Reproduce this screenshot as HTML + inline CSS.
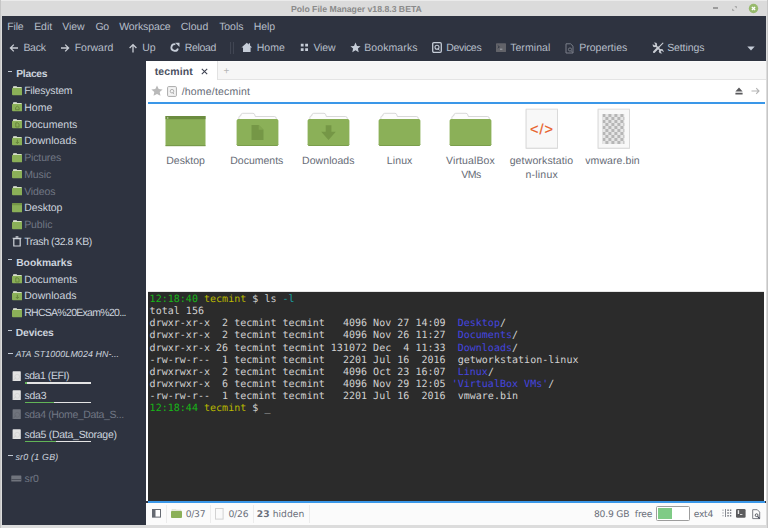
<!DOCTYPE html>
<html><head><meta charset="utf-8"><title>Polo File Manager</title>
<style>
html,body{margin:0;padding:0}
body{width:768px;height:528px;overflow:hidden;background:#dcdcdc;position:relative;font-family:"Liberation Sans",sans-serif;font-size:10.5px;text-rendering:geometricPrecision}
div{box-sizing:border-box}
.abs{position:absolute}
.t{position:absolute;white-space:nowrap;line-height:14px;font-size:10.5px;color:#cdd4de}
.tbx{color:#b6bec9}
.hd{font-weight:700;font-size:10.3px}
.it{font-style:italic;font-size:8.9px}
.dim{color:#717784}
.fl{color:#666b76}
.tab{font-weight:700;color:#4b5162}
.ttl{font-weight:700;font-size:8.7px;color:#8a8a8a}
.st{color:#6a6f7a;font-size:9.2px;font-family:"DejaVu Sans","Liberation Sans",sans-serif}
.dash{position:absolute;width:4.6px;height:1.1px;background:#c0c7d1}
.ic{position:absolute}
.ln{position:absolute;left:149.6px;margin:0;font-family:"DejaVu Sans Mono","Liberation Mono",monospace;font-size:10px;letter-spacing:0.02px;line-height:12px;color:#d2d2d2;white-space:pre}
.g{color:#17b817} .y{color:#b9b900} .c{color:#18a0a0} .b{color:#4545e0}
</style></head><body>
<div class="abs" style="left:0;top:0;width:768px;height:16px;background:#dbdbdb"></div>
<div class="abs" style="left:0;top:0;width:768px;height:1px;background:#ebebeb"></div>
<div class="abs" style="left:0;top:0;width:1px;height:528px;background:#c6c6c6"></div>
<div class="abs" style="left:767px;top:0;width:1px;height:528px;background:#c6c6c6"></div>
<div class="t ttl" style="left:290.90px;top:2.00px;letter-spacing:-0.007px;">Polo File Manager v18.8.3 BETA</div>
<div class="abs" style="left:713.4px;top:7.2px;width:4.6px;height:1.5px;background:#9c9c9c"></div>
<svg class="ic" style="left:731.8px;top:5.8px" width="5" height="5" viewBox="0 0 5 5"><path d="M2.4 0.2h2.4v2.4zM0.2 2.4v2.4h2.4z" fill="#9a9a9a"/></svg>
<svg class="ic" style="left:747.6px;top:2.5px" width="11" height="11" viewBox="0 0 11 11"><circle cx="5.5" cy="5.5" r="4.7" fill="#97ba6c"/><path d="M3.9 3.9l3.2 3.2M7.1 3.9L3.9 7.1" stroke="#fff" stroke-width="1.4"/></svg>

<div class="abs" style="left:2.1px;top:16.1px;width:763.8px;height:509.4px;background:#2e3340"></div>
<div class="t tbx" style="left:7.15px;top:20.00px;letter-spacing:-0.118px;">File</div><div class="t tbx" style="left:34.15px;top:20.00px;letter-spacing:-0.036px;">Edit</div><div class="t tbx" style="left:62.15px;top:20.00px;letter-spacing:-0.032px;">View</div><div class="t tbx" style="left:95.40px;top:20.00px;letter-spacing:-0.408px;">Go</div><div class="t tbx" style="left:119.15px;top:20.00px;letter-spacing:-0.098px;">Workspace</div><div class="t tbx" style="left:180.65px;top:20.00px;letter-spacing:0.052px;">Cloud</div><div class="t tbx" style="left:219.15px;top:20.00px;letter-spacing:-0.063px;">Tools</div><div class="t tbx" style="left:253.65px;top:20.00px;letter-spacing:-0.040px;">Help</div>
<div class="t tbx" style="left:23.40px;top:41.00px;letter-spacing:-0.286px;">Back</div><div class="t tbx" style="left:74.65px;top:41.00px;letter-spacing:0.026px;">Forward</div><div class="t tbx" style="left:142.15px;top:41.00px;letter-spacing:0.006px;">Up</div><div class="t tbx" style="left:184.65px;top:41.00px;letter-spacing:-0.305px;">Reload</div><div class="t tbx" style="left:256.65px;top:41.00px;letter-spacing:0.046px;">Home</div><div class="t tbx" style="left:313.40px;top:41.00px;letter-spacing:-0.095px;">View</div><div class="t tbx" style="left:364.15px;top:41.00px;letter-spacing:0.104px;">Bookmarks</div><div class="t tbx" style="left:446.15px;top:41.00px;letter-spacing:-0.308px;">Devices</div><div class="t tbx" style="left:510.15px;top:41.00px;letter-spacing:0.064px;">Terminal</div><div class="t tbx" style="left:579.15px;top:41.00px;letter-spacing:0.034px;">Properties</div><div class="t tbx" style="left:667.15px;top:41.00px;letter-spacing:-0.094px;">Settings</div>

<svg class="ic" style="left:9px;top:42.5px" width="10" height="10" viewBox="0 0 10 10"><path d="M9 5H1.8M4.8 1.6L1.4 5l3.4 3.4" fill="none" stroke="#c9cdd4" stroke-width="1.3"/></svg>
<svg class="ic" style="left:60px;top:42.5px" width="10" height="10" viewBox="0 0 10 10"><path d="M1 5h7.2M5.2 1.6L8.6 5 5.2 8.4" fill="none" stroke="#c9cdd4" stroke-width="1.3"/></svg>
<svg class="ic" style="left:128px;top:42.5px" width="10" height="10" viewBox="0 0 10 10"><path d="M5 9.4V1.8M1.6 5L5 1.6 8.4 5" fill="none" stroke="#c9cdd4" stroke-width="1.3"/></svg>
<svg class="ic" style="left:169.8px;top:42.1px" width="10" height="10" viewBox="0 0 10 10"><path d="M7.9 6.4A3.3 3.3 0 1 1 5.4 2.3" fill="none" stroke="#c6cdd8" stroke-width="1.8"/><path d="M5.2 0.7h4.3v4.3z" fill="#c6cdd8"/></svg>
<div class="abs" style="left:230px;top:41.5px;width:1px;height:12px;background:#414653"></div>
<div class="abs" style="left:232.5px;top:41.5px;width:1px;height:12px;background:#414653"></div>
<svg class="ic" style="left:241.4px;top:42.3px" width="11.6" height="10.5" viewBox="0 0 11 10"><path d="M5.5 0.6L0.4 5.2h1.5V9.6h7.2V5.2h1.5L8.6 3.4V1.2H7.4v1.1z" fill="#c6cdd8"/></svg>
<svg class="ic" style="left:299.8px;top:43px" width="9" height="9" viewBox="0 0 9 9"><path d="M0.8 0.8h2.8v2.8H0.8zM5.2 0.8H8v2.8H5.2zM0.8 5.2h2.8V8H0.8zM5.2 5.2H8V8H5.2z" fill="#c6cdd8"/></svg>
<svg class="ic" style="left:349.6px;top:42.3px" width="11" height="11" viewBox="0 0 11 11"><path d="M5.5 0.5l1.5 3.4 3.6.3-2.7 2.4.8 3.6L5.5 8.3 2.3 10.2l.8-3.6L.4 4.2l3.6-.3z" fill="#c6cdd8"/></svg>
<svg class="ic" style="left:432px;top:42.3px" width="10" height="11" viewBox="0 0 10 11"><rect x="0.7" y="0.7" width="8.6" height="9.6" rx="1.2" fill="none" stroke="#c6cdd8" stroke-width="1.3"/><circle cx="5" cy="5.3" r="2" fill="none" stroke="#c6cdd8" stroke-width="1.1"/><path d="M6 6.6l1.4 1.8" stroke="#c6cdd8" stroke-width="1"/></svg>
<svg class="ic" style="left:496px;top:43px" width="10" height="9.4" viewBox="0 0 10 9"><rect x="0" y="0" width="10" height="9" rx="0.8" fill="#626369"/><path d="M4 6h2.4" stroke="#b9bcc2" stroke-width="0.8"/><path d="M1.8 2.4l1.6 1.3-1.6 1.3" fill="none" stroke="#2e3340" stroke-width="0.9"/></svg>
<svg class="ic" style="left:565px;top:42.7px" width="9" height="11" viewBox="0 0 9 11"><path d="M1 0.8h4.5L8 3.2V10H1z" fill="none" stroke="#7a7f89" stroke-width="1"/><circle cx="5" cy="6.5" r="1.6" fill="none" stroke="#7a7f89" stroke-width="0.9"/><path d="M6.2 7.8l1.6 1.8" stroke="#7a7f89" stroke-width="0.9"/></svg>
<svg class="ic" style="left:651.6px;top:41.5px" width="12" height="12" viewBox="0 0 12 12"><g fill="#c9cdd4" stroke="none"><path d="M2.4 3.6L3.6 2.4l6 6L8.4 9.6z"/><circle cx="2.9" cy="2.9" r="2.3"/><circle cx="9.2" cy="9.2" r="2.3"/></g><path d="M3.5 2.3L0.4 -0.8L-0.8 0.4L2.3 3.5z" fill="#2e3340"/><path d="M8.6 9.8l3.1 3.1 1.2-1.2-3.1-3.1z" fill="#2e3340"/><path d="M10.9 1.1L6.2 5.8" stroke="#c9cdd4" stroke-width="1.1" stroke-linecap="round"/><path d="M6.4 5.6L2 10" stroke="#c9cdd4" stroke-width="2.1" stroke-linecap="round"/></svg>
<svg class="ic" style="left:747px;top:45.7px" width="8" height="5" viewBox="0 0 8 5"><path d="M0.3 0.5h7.4L4 4.6z" fill="#c6cdd8"/></svg>

<!-- sidebar -->
<div class="dash" style="left:7.6px;top:70.50px"></div><div class="t hd" style="left:16.15px;top:68.00px;letter-spacing:-0.240px;">Places</div><svg class="ic" style="left:11.5px;top:85.65px" width="10.9" height="9.9" viewBox="0 0 11 10"><path d="M1 1 Q1 0.2 1.8 0.2 L4.6 0.2 L5.2 0.9 L9.2 0.9 Q9.9 0.9 9.9 1.6 L9.9 4 L1 4 Z" fill="#eef1e8"/><rect x="0" y="1.7" width="10.8" height="7.6" rx="1" fill="#8bb058"/></svg><div class="t " style="left:24.15px;top:84.00px;letter-spacing:-0.199px;">Filesystem</div><svg class="ic" style="left:11.5px;top:102.4px" width="10.9" height="9.9" viewBox="0 0 11 10"><path d="M1 1 Q1 0.2 1.8 0.2 L4.6 0.2 L5.2 0.9 L9.2 0.9 Q9.9 0.9 9.9 1.6 L9.9 4 L1 4 Z" fill="#eef1e8"/><rect x="0" y="1.7" width="10.8" height="7.6" rx="1" fill="#8bb058"/><path d="M3.6 7.8V5.7L5.4 4.2l1.8 1.5v2.1z" fill="none" stroke="#5f7c36" stroke-width="0.8"/></svg><div class="t " style="left:24.15px;top:101.00px;letter-spacing:0.046px;">Home</div><svg class="ic" style="left:11.5px;top:119.15px" width="10.9" height="9.9" viewBox="0 0 11 10"><path d="M1 1 Q1 0.2 1.8 0.2 L4.6 0.2 L5.2 0.9 L9.2 0.9 Q9.9 0.9 9.9 1.6 L9.9 4 L1 4 Z" fill="#eef1e8"/><rect x="0" y="1.7" width="10.8" height="7.6" rx="1" fill="#8bb058"/><path d="M3.8 3.9h2l1.3 1.2v3h-3.3z" fill="none" stroke="#5f7c36" stroke-width="0.8"/></svg><div class="t " style="left:24.15px;top:118.00px;letter-spacing:0.010px;">Documents</div><svg class="ic" style="left:11.5px;top:135.9px" width="10.9" height="9.9" viewBox="0 0 11 10"><path d="M1 1 Q1 0.2 1.8 0.2 L4.6 0.2 L5.2 0.9 L9.2 0.9 Q9.9 0.9 9.9 1.6 L9.9 4 L1 4 Z" fill="#eef1e8"/><rect x="0" y="1.7" width="10.8" height="7.6" rx="1" fill="#8bb058"/><path d="M5.4 3.8v3.6M3.9 6.1l1.5 1.5 1.5-1.5" fill="none" stroke="#5f7c36" stroke-width="0.9"/></svg><div class="t " style="left:24.15px;top:134.00px;letter-spacing:0.055px;">Downloads</div><svg class="ic" style="left:11.5px;top:152.65px" width="10.9" height="9.9" viewBox="0 0 11 10"><path d="M1 1 Q1 0.2 1.8 0.2 L4.6 0.2 L5.2 0.9 L9.2 0.9 Q9.9 0.9 9.9 1.6 L9.9 4 L1 4 Z" fill="#eef1e8"/><rect x="0" y="1.7" width="10.8" height="7.6" rx="1" fill="#8bb058"/></svg><div class="t dim" style="left:24.15px;top:151.00px;letter-spacing:-0.123px;">Pictures</div><svg class="ic" style="left:11.5px;top:169.4px" width="10.9" height="9.9" viewBox="0 0 11 10"><path d="M1 1 Q1 0.2 1.8 0.2 L4.6 0.2 L5.2 0.9 L9.2 0.9 Q9.9 0.9 9.9 1.6 L9.9 4 L1 4 Z" fill="#eef1e8"/><rect x="0" y="1.7" width="10.8" height="7.6" rx="1" fill="#8bb058"/></svg><div class="t dim" style="left:24.15px;top:168.00px;letter-spacing:-0.094px;">Music</div><svg class="ic" style="left:11.5px;top:186.15px" width="10.9" height="9.9" viewBox="0 0 11 10"><path d="M1 1 Q1 0.2 1.8 0.2 L4.6 0.2 L5.2 0.9 L9.2 0.9 Q9.9 0.9 9.9 1.6 L9.9 4 L1 4 Z" fill="#eef1e8"/><rect x="0" y="1.7" width="10.8" height="7.6" rx="1" fill="#8bb058"/></svg><div class="t dim" style="left:24.15px;top:185.00px;letter-spacing:-0.120px;">Videos</div><svg class="ic" style="left:11.5px;top:202.9px" width="10.9" height="9.9" viewBox="0 0 11 10"><rect x="0" y="0.2" width="10.8" height="9.2" rx="0.7" fill="#8bb058"/><rect x="0" y="0.2" width="10.8" height="2" rx="0.5" fill="#759746"/></svg><div class="t " style="left:24.15px;top:201.00px;letter-spacing:-0.047px;">Desktop</div><svg class="ic" style="left:11.5px;top:219.65px" width="10.9" height="9.9" viewBox="0 0 11 10"><path d="M1 1 Q1 0.2 1.8 0.2 L4.6 0.2 L5.2 0.9 L9.2 0.9 Q9.9 0.9 9.9 1.6 L9.9 4 L1 4 Z" fill="#eef1e8"/><rect x="0" y="1.7" width="10.8" height="7.6" rx="1" fill="#8bb058"/></svg><div class="t dim" style="left:24.15px;top:218.00px;letter-spacing:-0.068px;">Public</div><svg class="ic" style="left:12px;top:235.55px" width="10" height="11" viewBox="0 0 10 11"><path d="M1.8 2.6h6.4v7.4H1.8z" fill="none" stroke="#d0d4da" stroke-width="1.2"/><path d="M0.6 2.2h8.8M3.6 0.9h2.8" stroke="#d0d4da" stroke-width="1.1"/></svg><div class="t " style="left:24.15px;top:235.00px;letter-spacing:-0.402px;">Trash (32.8 KB)</div><div class="dash" style="left:7.6px;top:259.00px"></div><div class="t hd" style="left:16.15px;top:257.00px;letter-spacing:0.012px;">Bookmarks</div><svg class="ic" style="left:11.5px;top:274.15px" width="10.9" height="9.9" viewBox="0 0 11 10"><path d="M1 1 Q1 0.2 1.8 0.2 L4.6 0.2 L5.2 0.9 L9.2 0.9 Q9.9 0.9 9.9 1.6 L9.9 4 L1 4 Z" fill="#eef1e8"/><rect x="0" y="1.7" width="10.8" height="7.6" rx="1" fill="#8bb058"/><path d="M3.8 3.9h2l1.3 1.2v3h-3.3z" fill="none" stroke="#5f7c36" stroke-width="0.8"/></svg><div class="t " style="left:24.15px;top:273.00px;letter-spacing:0.010px;">Documents</div><svg class="ic" style="left:11.5px;top:291.0px" width="10.9" height="9.9" viewBox="0 0 11 10"><path d="M1 1 Q1 0.2 1.8 0.2 L4.6 0.2 L5.2 0.9 L9.2 0.9 Q9.9 0.9 9.9 1.6 L9.9 4 L1 4 Z" fill="#eef1e8"/><rect x="0" y="1.7" width="10.8" height="7.6" rx="1" fill="#8bb058"/><path d="M5.4 3.8v3.6M3.9 6.1l1.5 1.5 1.5-1.5" fill="none" stroke="#5f7c36" stroke-width="0.9"/></svg><div class="t " style="left:24.15px;top:289.00px;letter-spacing:0.055px;">Downloads</div><svg class="ic" style="left:11.5px;top:307.75px" width="10.9" height="9.9" viewBox="0 0 11 10"><path d="M1 1 Q1 0.2 1.8 0.2 L4.6 0.2 L5.2 0.9 L9.2 0.9 Q9.9 0.9 9.9 1.6 L9.9 4 L1 4 Z" fill="#eef1e8"/><rect x="0" y="1.7" width="10.8" height="7.6" rx="1" fill="#8bb058"/></svg><div class="t " style="left:24.15px;top:306.00px;letter-spacing:-0.705px;">RHCSA%20Exam%20...</div><div class="dash" style="left:7.6px;top:329.80px"></div><div class="t hd" style="left:15.85px;top:327.00px;letter-spacing:-0.163px;">Devices</div><div class="dash" style="left:8.3px;top:352.80px"></div><div class="t it" style="left:15.40px;top:347.00px;letter-spacing:0.082px;">ATA ST1000LM024 HN-...</div><svg class="ic" style="left:12.4px;top:370.5px" width="10" height="11" viewBox="0 0 10 11"><rect x="0.6" y="0.3" width="8.2" height="9.8" rx="0.7" fill="#e4e4e4"/><circle cx="5.2" cy="5.8" r="2.4" fill="none" stroke="#cfcfcf" stroke-width="0.6"/><path d="M1.2 9.6l2.6-3.2" stroke="#cfcfcf" stroke-width="0.9"/></svg><div class="t " style="left:24.45px;top:369.00px;letter-spacing:-0.452px;">sda1 (EFI)</div><div class="abs" style="left:24.7px;top:382.1px;width:66.1px;height:1.6px;background:#e4e4e4"><div style="width:2px;height:1.6px;background:#62b457"></div></div><svg class="ic" style="left:12.4px;top:390.0px" width="10" height="11" viewBox="0 0 10 11"><rect x="0.6" y="0.3" width="8.2" height="9.8" rx="0.7" fill="#e4e4e4"/><circle cx="5.2" cy="5.8" r="2.4" fill="none" stroke="#cfcfcf" stroke-width="0.6"/><path d="M1.2 9.6l2.6-3.2" stroke="#cfcfcf" stroke-width="0.9"/></svg><div class="t " style="left:24.45px;top:389.00px;letter-spacing:-0.245px;">sda3</div><div class="abs" style="left:24.7px;top:401.6px;width:66.1px;height:1.6px;background:#e4e4e4"><div style="width:29px;height:1.6px;background:#62b457"></div></div><svg class="ic" style="left:12.4px;top:409.0px" width="10" height="11" viewBox="0 0 10 11"><rect x="0.6" y="0.3" width="8.2" height="9.8" rx="0.7" fill="#70747d"/><circle cx="5.2" cy="5.8" r="2.4" fill="none" stroke="#63676f" stroke-width="0.6"/><path d="M1.2 9.6l2.6-3.2" stroke="#63676f" stroke-width="0.9"/></svg><div class="t dim" style="left:24.45px;top:408.00px;letter-spacing:-0.376px;">sda4 (Home_Data_S...</div><svg class="ic" style="left:12.4px;top:429.0px" width="10" height="11" viewBox="0 0 10 11"><rect x="0.6" y="0.3" width="8.2" height="9.8" rx="0.7" fill="#e4e4e4"/><circle cx="5.2" cy="5.8" r="2.4" fill="none" stroke="#cfcfcf" stroke-width="0.6"/><path d="M1.2 9.6l2.6-3.2" stroke="#cfcfcf" stroke-width="0.9"/></svg><div class="t " style="left:24.45px;top:428.00px;letter-spacing:-0.273px;">sda5 (Data_Storage)</div><div class="abs" style="left:24.7px;top:440.6px;width:66.1px;height:1.6px;background:#e4e4e4"><div style="width:31.6px;height:1.6px;background:#62b457"></div></div><div class="dash" style="left:8.3px;top:455.30px"></div><div class="t it" style="left:15.40px;top:450.00px;letter-spacing:0.221px;">sr0 (1 GB)</div><svg class="ic" style="left:11.2px;top:474.7px" width="11" height="7.4" viewBox="0 0 12 8"><rect x="0.3" y="0.5" width="11" height="6.5" rx="0.6" fill="#70747d"/><rect x="0.3" y="4.4" width="11" height="1" fill="#4a4e58"/></svg><div class="t dim" style="left:24.45px;top:472.00px;letter-spacing:-0.031px;">sr0</div>
<!-- main -->
<div class="abs" style="left:146.2px;top:61px;width:619.5px;height:440px;background:#fff"></div>
<div class="abs" style="left:146.2px;top:61px;width:619.5px;height:19px;background:#f6f6f6;border-top:1px solid #fafafa;border-bottom:1px solid #e4e4e4"></div>
<div class="abs" style="left:146px;top:61px;width:71.7px;height:19px;background:#fff;border-right:1px solid #e2e2e2"></div>
<div class="t tab" style="left:154.65px;top:65.00px;letter-spacing:0.137px;">tecmint</div>
<svg class="ic" style="left:201px;top:67.8px" width="7" height="7" viewBox="0 0 7 7"><path d="M0.8 0.8l5.4 5.4M6.2 0.8L0.8 6.2" stroke="#3c4150" stroke-width="1.05"/></svg>
<div class="abs" style="left:223.6px;top:65px;font-size:10px;line-height:14px;color:#b5b5b5">+</div>
<svg class="ic" style="left:151px;top:85.4px" width="12" height="11" viewBox="0 0 12 11"><path d="M6 0.4l1.7 3.6 3.9.4-2.9 2.6.8 3.8L6 8.9 2.5 10.8l.8-3.8L.4 4.4l3.9-.4z" fill="#b9b9b9"/></svg>
<svg class="ic" style="left:167px;top:85.6px" width="10" height="11" viewBox="0 0 10 11"><rect x="0.6" y="0.6" width="8.8" height="9.8" rx="1" fill="#f4f4f4" stroke="#a9a9a9" stroke-width="1"/><circle cx="5" cy="5.2" r="1.8" fill="none" stroke="#a9a9a9" stroke-width="0.9"/><path d="M5.8 6.4l1.2 1.8" stroke="#a9a9a9" stroke-width="0.9"/></svg>
<div class="t fl" style="left:181.65px;top:85.00px;letter-spacing:0.196px;">/home/tecmint</div>
<svg class="ic" style="left:735px;top:87.4px" width="8" height="8" viewBox="0 0 8 8"><path d="M4 0.4L7.6 4.6H0.4zM0.4 5.8h7.2v1.6H0.4z" fill="#5a5a5d"/></svg>
<svg class="ic" style="left:751px;top:87.4px" width="9" height="8" viewBox="0 0 9 8"><path d="M0.5 4h7.4M5.2 1.2L8 4 5.2 6.8" fill="none" stroke="#b4b4b4" stroke-width="1.1"/></svg>
<div class="abs" style="left:147.7px;top:102.2px;width:617.4px;height:2.1px;background:#3a97e8"></div>
<svg class="ic" style="left:164.40px;top:110px" width="43" height="38" viewBox="0 0 43 38"><rect x="1.5" y="6" width="40" height="30.1" fill="#8bb058"/><rect x="1.5" y="6" width="40" height="3.2" fill="#6b8c3f"/><rect x="3.2" y="7.4" width="1.1" height="1.1" fill="#eef3e2"/><rect x="1.5" y="35.4" width="40" height="0.7" fill="#6b8c3f"/></svg><svg class="ic" style="left:235.60px;top:110px" width="43" height="38" viewBox="0 0 43 38"><path d="M2.9 7.4 Q2.9 6 4 6 L4.6 6 Q4.8 3.3 6.6 3.3 L17 3.3 Q18.4 3.3 18.8 4.8 L19.3 6.5 L38.4 6.5 Q40.3 6.5 40.3 8.4 L40.3 13 L2.9 13 Z" fill="#fdfdfd" stroke="#c9c9c9" stroke-width="0.7"/><rect x="0.6" y="9" width="41.8" height="27.1" rx="1.8" fill="#8bb058"/><path d="M0.6 33.8 Q0.6 35.5 2.4 35.5 L40.6 35.5 Q42.4 35.5 42.4 33.8 L42.4 34.3 Q42.4 36.1 40.6 36.1 L2.4 36.1 Q0.6 36.1 0.6 34.3Z" fill="#6b8c3f"/><path d="M15.5 14.9h7.2l4.8 4.8v10.3H15.5z" fill="#759746"/><path d="M22.7 14.9v4.8h4.8z" fill="#82a650"/></svg><svg class="ic" style="left:306.70px;top:110px" width="43" height="38" viewBox="0 0 43 38"><path d="M2.9 7.4 Q2.9 6 4 6 L4.6 6 Q4.8 3.3 6.6 3.3 L17 3.3 Q18.4 3.3 18.8 4.8 L19.3 6.5 L38.4 6.5 Q40.3 6.5 40.3 8.4 L40.3 13 L2.9 13 Z" fill="#fdfdfd" stroke="#c9c9c9" stroke-width="0.7"/><rect x="0.6" y="9" width="41.8" height="27.1" rx="1.8" fill="#8bb058"/><path d="M0.6 33.8 Q0.6 35.5 2.4 35.5 L40.6 35.5 Q42.4 35.5 42.4 33.8 L42.4 34.3 Q42.4 36.1 40.6 36.1 L2.4 36.1 Q0.6 36.1 0.6 34.3Z" fill="#6b8c3f"/><path d="M18.7 15.2h5.7v6.6h4.4L21.5 30 14.2 21.8h4.5z" fill="#759746"/></svg><svg class="ic" style="left:377.90px;top:110px" width="43" height="38" viewBox="0 0 43 38"><path d="M2.9 7.4 Q2.9 6 4 6 L4.6 6 Q4.8 3.3 6.6 3.3 L17 3.3 Q18.4 3.3 18.8 4.8 L19.3 6.5 L38.4 6.5 Q40.3 6.5 40.3 8.4 L40.3 13 L2.9 13 Z" fill="#fdfdfd" stroke="#c9c9c9" stroke-width="0.7"/><rect x="0.6" y="9" width="41.8" height="27.1" rx="1.8" fill="#8bb058"/><path d="M0.6 33.8 Q0.6 35.5 2.4 35.5 L40.6 35.5 Q42.4 35.5 42.4 33.8 L42.4 34.3 Q42.4 36.1 40.6 36.1 L2.4 36.1 Q0.6 36.1 0.6 34.3Z" fill="#6b8c3f"/></svg><svg class="ic" style="left:449.20px;top:110px" width="43" height="38" viewBox="0 0 43 38"><path d="M2.9 7.4 Q2.9 6 4 6 L4.6 6 Q4.8 3.3 6.6 3.3 L17 3.3 Q18.4 3.3 18.8 4.8 L19.3 6.5 L38.4 6.5 Q40.3 6.5 40.3 8.4 L40.3 13 L2.9 13 Z" fill="#fdfdfd" stroke="#c9c9c9" stroke-width="0.7"/><rect x="0.6" y="9" width="41.8" height="27.1" rx="1.8" fill="#8bb058"/><path d="M0.6 33.8 Q0.6 35.5 2.4 35.5 L40.6 35.5 Q42.4 35.5 42.4 33.8 L42.4 34.3 Q42.4 36.1 40.6 36.1 L2.4 36.1 Q0.6 36.1 0.6 34.3Z" fill="#6b8c3f"/></svg><svg class="ic" style="left:524px;top:107px" width="36" height="43" viewBox="0 0 36 43">
<rect x="1.7" y="2.4" width="32.2" height="39.4" fill="#dcdcdc"/>
<rect x="2.1" y="2.1" width="31.4" height="39" fill="#f8f8f8" stroke="#d6d6d6" stroke-width="0.8"/>
<text x="18" y="26.6" text-anchor="middle" font-family="Liberation Sans, sans-serif" font-size="14.5" letter-spacing="1" fill="#e8622b" stroke="#e8622b" stroke-width="0.2">&lt;/&gt;</text></svg><svg class="ic" style="left:595.6px;top:107px" width="36" height="43" viewBox="0 0 36 43">
<defs><pattern id="chk" x="6.4" y="7" width="6" height="6" patternUnits="userSpaceOnUse"><rect width="6" height="6" fill="#e6e6e6"/><rect width="3" height="3" fill="#b6b6b6"/><rect x="3" y="3" width="3" height="3" fill="#b6b6b6"/></pattern></defs>
<rect x="1.7" y="2.4" width="32.2" height="39.4" fill="#dcdcdc"/>
<rect x="2.1" y="2.1" width="31.4" height="39" fill="#f8f8f8" stroke="#d6d6d6" stroke-width="0.8"/>
<rect x="6.4" y="7" width="22" height="30" fill="url(#chk)"/></svg><div class="t fl" style="left:166.25px;top:154.00px;letter-spacing:0.024px;">Desktop</div><div class="t fl" style="left:230.25px;top:154.00px;letter-spacing:-0.001px;">Documents</div><div class="t fl" style="left:302.05px;top:154.00px;letter-spacing:0.061px;">Downloads</div><div class="t fl" style="left:386.65px;top:154.00px;letter-spacing:0.158px;">Linux</div><div class="t fl" style="left:446.05px;top:154.00px;letter-spacing:0.123px;">VirtualBox</div><div class="t fl" style="left:461.15px;top:168.00px;letter-spacing:-0.433px;">VMs</div><div class="t fl" style="left:509.65px;top:154.00px;letter-spacing:0.140px;">getworkstatio</div><div class="t fl" style="left:525.45px;top:168.00px;letter-spacing:0.223px;">n-linux</div><div class="t fl" style="left:585.25px;top:154.00px;letter-spacing:0.081px;">vmware.bin</div>
<!-- terminal -->
<div class="abs" style="left:148.4px;top:290.6px;width:615.8px;height:1.5px;background:#e6e6e6"></div>
<div class="abs" style="left:148.4px;top:292px;width:615.8px;height:208.5px;background:#2b2b2b"></div>
<div class="ln" style="top:294px"><span class="g">12:18:40</span> <span class="y">tecmint</span> $ ls <span class="c">-l</span></div><div class="ln" style="top:306px">total 156</div><div class="ln" style="top:318px">drwxr-xr-x  2 tecmint tecmint   4096 Nov 27 14:09  <span class="b">Desktop</span>/</div><div class="ln" style="top:330px">drwxr-xr-x  2 tecmint tecmint   4096 Nov 26 11:27  <span class="b">Documents</span>/</div><div class="ln" style="top:343px">drwxr-xr-x 26 tecmint tecmint 131072 Dec  4 11:33  <span class="b">Downloads</span>/</div><div class="ln" style="top:355px">-rw-rw-r--  1 tecmint tecmint   2201 Jul 16  2016  getworkstation-linux</div><div class="ln" style="top:367px">drwxrwxr-x  2 tecmint tecmint   4096 Oct 23 16:07  <span class="b">Linux</span>/</div><div class="ln" style="top:379px">drwxrwxr-x  6 tecmint tecmint   4096 Nov 29 12:05 <span class="b">'VirtualBox VMs'</span>/</div><div class="ln" style="top:391px">-rw-rw-r--  1 tecmint tecmint   2201 Jul 16  2016  vmware.bin</div><div class="ln" style="top:403px"><span class="g">12:18:44</span> <span class="y">tecmint</span> $ _</div>

<div class="abs" style="left:147.7px;top:500.9px;width:617.4px;height:1.9px;background:#3a97e8"></div>
<div class="abs" style="left:146.2px;top:502.8px;width:619.5px;height:22.7px;background:#fbfbfb"></div>
<svg class="ic" style="left:152.4px;top:509.2px" width="9" height="9" viewBox="0 0 9 9"><rect x="0.5" y="0.5" width="8" height="7.6" fill="#fff" stroke="#666a72" stroke-width="1"/><rect x="0.5" y="0.5" width="3" height="7.6" fill="#666a72"/></svg>
<div class="abs" style="left:166px;top:505px;width:1px;height:18px;background:#ececec"></div>
<svg class="ic" style="left:170.6px;top:508.6px" width="12" height="10" viewBox="0 0 12 10"><path d="M0.8 0.9 Q0.8 0.2 1.5 0.2 L4.6 0.2 L5.4 1 L9.6 1 Q10.2 1 10.2 1.6 V4 H0.8z" fill="#e6eadc" stroke="#cfd4c4" stroke-width="0.4"/><rect x="0" y="1.9" width="11" height="7" rx="0.9" fill="#8bb058"/></svg>
<div class="t st" style="left:185.65px;top:508.00px;letter-spacing:-0.235px;">0/37</div>
<div class="abs" style="left:209.5px;top:505px;width:1px;height:18px;background:#ececec"></div>
<svg class="ic" style="left:215px;top:507.6px" width="9" height="12" viewBox="0 0 9 12"><rect x="0.5" y="0.5" width="7.6" height="10.6" fill="#fafafa" stroke="#d2d2d2" stroke-width="1"/></svg>
<div class="t st" style="left:228.45px;top:508.00px;letter-spacing:-0.185px;">0/26</div>
<div class="abs" style="left:252.5px;top:505px;width:1px;height:18px;background:#ececec"></div>
<div class="t st" style="left:256.85px;top:508.00px;letter-spacing:0.030px;"><b>23</b> hidden</div>
<div class="abs" style="left:308.5px;top:505px;width:1px;height:18px;background:#ececec"></div>
<div class="t st" style="left:593.95px;top:508.00px;letter-spacing:-0.190px;">80.9 GB&nbsp; free</div>
<div class="abs" style="left:656px;top:506px;width:33.6px;height:14.6px;border:1px solid #9d9d9d;border-radius:1.5px;background:#fff;padding:1px"><div style="width:14px;height:10.6px;background:#7fcb86"></div></div>
<div class="t st" style="left:693.65px;top:508.00px;letter-spacing:-0.223px;">ext4</div>
<svg class="ic" style="left:722px;top:509px" width="10" height="9" viewBox="0 0 10 9">
<g fill="#a9acb2"><rect x="0.1" y="0.7" width="1.8" height="0.9"/><rect x="0.1" y="3.5" width="1.8" height="0.9"/><rect x="0.1" y="6.3" width="1.8" height="0.9"/></g>
<rect x="3.1" y="0" width="0.9" height="8" fill="#7a7d85"/>
<g fill="#6a6d75"><rect x="5.3" y="0.5" width="1.5" height="1.4"/><rect x="7.9" y="0.5" width="1.4" height="1.4"/><rect x="5.3" y="3.3" width="1.5" height="1.4"/><rect x="7.9" y="3.3" width="1.4" height="1.4"/><rect x="5.3" y="6.1" width="1.5" height="1.4"/><rect x="7.9" y="6.1" width="1.4" height="1.4"/></g></svg>
<svg class="ic" style="left:736.4px;top:508.8px" width="10" height="9" viewBox="0 0 10 9"><rect width="9.6" height="8.8" rx="1.2" fill="#5b5b5d"/><path d="M1.7 1.9h1.5M1.7 3.1h1.5M1.7 4.3h1.5M2.45 1.4v3.6M4 5.5h2.4" fill="none" stroke="#fff" stroke-width="0.75"/></svg>
<svg class="ic" style="left:751.8px;top:508.5px" width="9" height="11" viewBox="0 0 9 11"><path d="M0.7 0.7h4.6L7.7 3.1V9.6H0.7z" fill="#fbfbfb" stroke="#6b6e75" stroke-width="0.9"/><circle cx="4.6" cy="6.2" r="1.4" fill="none" stroke="#4a4d55" stroke-width="0.9"/><path d="M5.6 7.3l2 2.4" stroke="#3c4150" stroke-width="1.1"/></svg>

</body></html>
